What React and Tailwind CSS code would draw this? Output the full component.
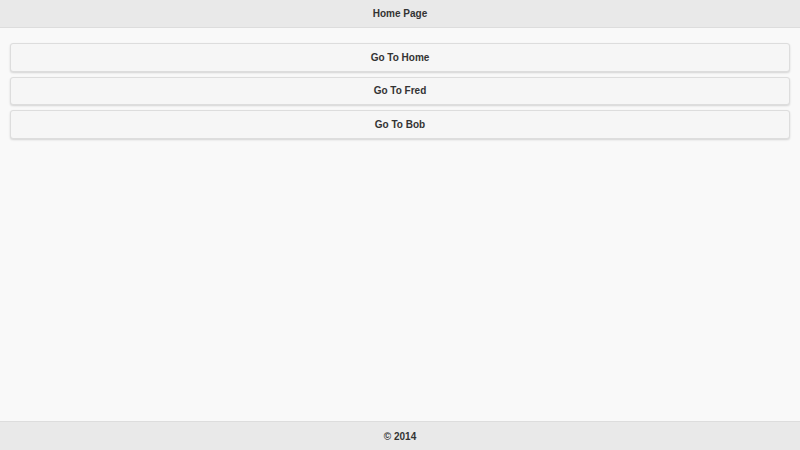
const links = ['Go To Home', 'Go To Fred', 'Go To Bob'];

export default function App() {
  return (
    <div
      className="w-[800px] h-[450px] flex flex-col bg-[#f9f9f9] text-[#333] overflow-hidden"
      style={{ fontFamily: '"Liberation Sans", Arial, sans-serif' }}
    >
      <div className="h-[28px] flex-none flex items-center justify-center bg-[#e9e9e9] border-b border-[#dddddd]">
        <h1 className="text-[10px] font-bold">Home Page</h1>
      </div>
      <div className="flex-1 px-[10px] pt-[15px] flex flex-col gap-[5px]">
        {links.map((label) => (
          <a
            key={label}
            href="#"
            className="h-[28.5px] flex items-center justify-center rounded-[3px] bg-[#f6f6f6] border border-[#dddddd] shadow-[0_1px_2px_rgba(0,0,0,0.15)] text-[10px] font-bold text-[#333]"
          >
            {label}
          </a>
        ))}
      </div>
      <div className="h-[29px] flex-none flex items-center justify-center bg-[#e9e9e9] border-t border-[#dddddd]">
        <h4 className="text-[10px] font-bold">© 2014</h4>
      </div>
    </div>
  );
}
